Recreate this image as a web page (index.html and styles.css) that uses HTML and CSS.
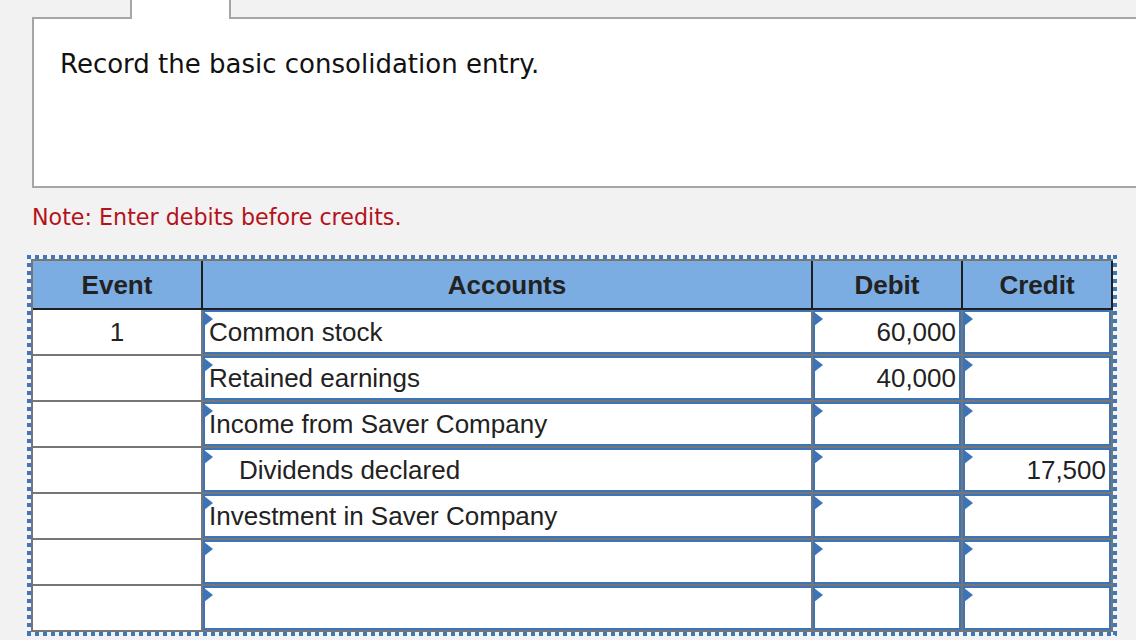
FILE: index.html
```html
<!DOCTYPE html>
<html lang="en">
<head>
<meta charset="utf-8">
<title>Basic consolidation entry</title>
<link rel="stylesheet" href="styles.css">
</head>
<body>
<div class="tabs">
  <div class="tab-gap"></div>
  <div class="tab"></div>
  <div class="tab-rest"></div>
</div>
<div class="question">
  <p class="prompt">Record the basic consolidation entry.</p>
</div>
<p class="note">Note: Enter debits before credits.</p>

<div class="journal">
  <div class="ledger">
    <div class="ledger-head">
      <div class="hcell">Event</div>
      <div class="hcell">Accounts</div>
      <div class="hcell">Debit</div>
      <div class="hcell">Credit</div>
    </div>

    <div class="ledger-row">
      <div class="event">1</div>
      <div class="field account"><span>Common stock</span></div>
      <div class="field amount"><span>60,000</span></div>
      <div class="field amount"></div>
    </div>
    <div class="ledger-row">
      <div class="event"></div>
      <div class="field account"><span>Retained earnings</span></div>
      <div class="field amount"><span>40,000</span></div>
      <div class="field amount"></div>
    </div>
    <div class="ledger-row">
      <div class="event"></div>
      <div class="field account"><span>Income from Saver Company</span></div>
      <div class="field amount"></div>
      <div class="field amount"></div>
    </div>
    <div class="ledger-row">
      <div class="event"></div>
      <div class="field account indent"><span>Dividends declared</span></div>
      <div class="field amount"></div>
      <div class="field amount"><span>17,500</span></div>
    </div>
    <div class="ledger-row">
      <div class="event"></div>
      <div class="field account"><span>Investment in Saver Company</span></div>
      <div class="field amount"></div>
      <div class="field amount"></div>
    </div>
    <div class="ledger-row">
      <div class="event"></div>
      <div class="field account"></div>
      <div class="field amount"></div>
      <div class="field amount"></div>
    </div>
    <div class="ledger-row">
      <div class="event"></div>
      <div class="field account"></div>
      <div class="field amount"></div>
      <div class="field amount"></div>
    </div>
  </div>
</div>
</body>
</html>
```

FILE: styles.css
```css
html, body {
  margin: 0;
  padding: 0;
}

body {
  background: #f2f2f2;
  width: 1136px;
  height: 640px;
  overflow: hidden;
  font-family: "DejaVu Sans", Verdana, sans-serif;
}

.tabs {
  display: flex;
  height: 19px;
  margin-left: 32px;
}

.tab-gap {
  width: 98px;
  border-bottom: 2px solid #a6a6a6;
}

.tab {
  width: 97px;
  background: #fff;
  border-left: 2px solid #a6a6a6;
  border-right: 2px solid #a6a6a6;
}

.tab-rest {
  flex: 1;
  border-bottom: 2px solid #a6a6a6;
}

.question {
  margin-left: 32px;
  background: #fff;
  border-left: 2px solid #a6a6a6;
  border-bottom: 2px solid #a6a6a6;
  padding: 30px 0 0 26px;
  box-sizing: content-box;
  height: 137px;
}

.prompt {
  margin: 0;
  font-size: 26px;
  line-height: 31px;
  color: #111;
}

.note {
  margin: 16px 0 0 32px;
  font-size: 22.2px;
  line-height: 27px;
  color: #b5121b;
}

.journal {
  margin: 24px 0 0 27px;
  width: 1090px;
  box-sizing: border-box;
  padding: 4px;
  background:
    repeating-linear-gradient(90deg, #3d78bd 0 4px, transparent 4px 8px) left top / 100% 4px no-repeat,
    repeating-linear-gradient(90deg, #3d78bd 0 4px, transparent 4px 8px) left bottom / 100% 4px no-repeat,
    repeating-linear-gradient(180deg, #3d78bd 0 4px, transparent 4px 8px) left top / 4px 100% no-repeat,
    repeating-linear-gradient(180deg, #3d78bd 0 4px, transparent 4px 8px) right top / 4px 100% no-repeat;
}

.ledger {
  width: 1082px;
  border-left: 2px solid #767676;
  border-top: 2px solid #767676;
  box-sizing: border-box;
  font-family: "Liberation Sans", Arial, Helvetica, sans-serif;
  font-size: 26px;
  color: #222;
}

.ledger-head,
.ledger-row {
  display: grid;
  grid-template-columns: 168px 608px 148px 148px;
  column-gap: 2px;
}

.ledger-head {
  background: #1f1f1f;
  border-right: 2px solid #1f1f1f;
  border-bottom: 2px solid #1f1f1f;
}

.hcell {
  background: #7badE2;
  height: 47px;
  line-height: 49px;
  text-align: center;
  font-weight: bold;
  overflow: hidden;
}

.ledger-row {
  background: #767676;
  border-right: 2px solid #767676;
  border-bottom: 2px solid #767676;
}

.event {
  background: #fff;
  height: 44px;
  line-height: 45px;
  text-align: center;
  overflow: hidden;
}

.field {
  position: relative;
  height: 44px;
  box-sizing: border-box;
  background: #fff;
  border: 2px solid #3b74b8;
  line-height: 41px;
  white-space: nowrap;
  overflow: hidden;
}

.field::before {
  content: "";
  position: absolute;
  left: -1px;
  top: 0;
  border-left: 9px solid #3b74b8;
  border-top: 7px solid transparent;
  border-bottom: 7px solid transparent;
}

.field span {
  position: relative;
}

.account {
  border-right: none;
  padding-left: 4px;
}

.account.indent {
  padding-left: 34px;
}

.amount {
  text-align: right;
  padding-right: 3px;
}
```
